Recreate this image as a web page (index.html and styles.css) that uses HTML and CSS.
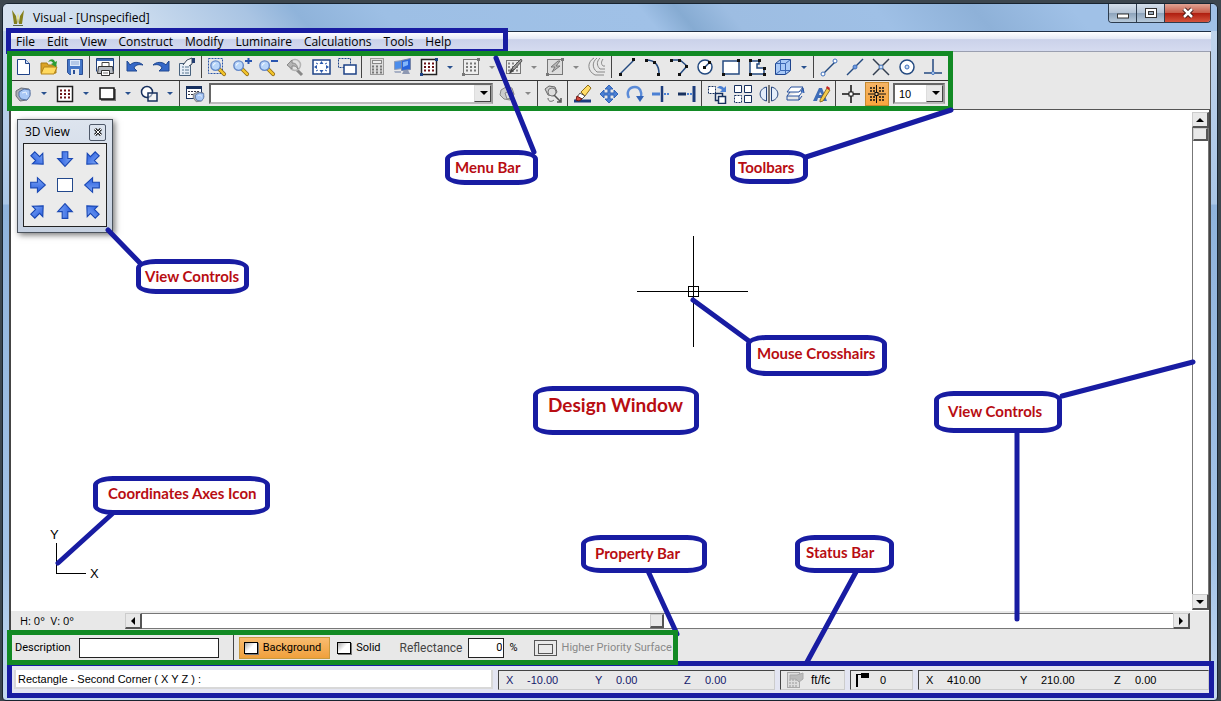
FILE: index.html
```
<!DOCTYPE html>
<html lang="en">
<head>
    <meta charset="UTF-8">
    <meta name="viewport" content="width=device-width, initial-scale=1.0">
    <title>Visual - [Unspecified]</title>
    <link rel="stylesheet" href="styles.css">
</head>
<body>
    <!-- shapes used by more than one button -->
    <svg class="defs" aria-hidden="true">
        <defs>
            <linearGradient id="arrow-fill" x1="0" y1="0" x2="0" y2="1"><stop offset="0" stop-color="#7ba4f4"/><stop offset="1" stop-color="#2a5fe0"/></linearGradient>
        </defs>
        <symbol id="lens" viewBox="0 0 20 20">
            <path d="M11 11l6 6" stroke="#8a6410" stroke-width="4" stroke-linecap="round"/>
            <path d="M11 11l6 6" stroke="#f2c42c" stroke-width="2.500" stroke-linecap="round"/>
            <circle cx="8" cy="8" r="5" fill="#b9d6fa" stroke="#6488c8" stroke-width="1.500"/>
            <path d="M5.500 8a3 3 0 0 1 2.500-2.500" fill="none" stroke="#fff"/>
        </symbol>
        <symbol id="view-arrow" viewBox="0 0 16 16">
            <path d="M1.500 5.500h6v-4l7 6.500-7 6.500v-4h-6z" fill="url(#arrow-fill)" stroke="#1a48b4"/>
        </symbol>
        <symbol id="dots" viewBox="0 0 20 20">
            <path d="M5 6.500h10M5 10h10M5 13.500h10" stroke-width="2" stroke-dasharray="2 2" fill="none"/>
        </symbol>
        <symbol id="surface" viewBox="0 0 20 20">
            <path d="M3 7l5-3 8 1 1 5-3 6-7 1-4-5z" fill="#a9adb4" stroke="#6c7078"/>
            <path d="M6 8l5-3 6 1v6l-3 4-6-1-2-3z" fill="#a9c8f6" stroke="#5573a8"/>
            <path d="M9 9l4-1 1 3" fill="none" stroke="#e8f2ff"/>
        </symbol>
    </svg>

    <div class="window">
        <header class="titlebar">
            <svg class="logo" viewBox="0 0 14 18"><path d="M1 1l2 14h3l1-5 1 5h3l2-14-4 6-1 6-1-8-1 8-1-6z" fill="#85801c"/><path d="M7 3l1 6-1 4-1-4z" fill="#f0ec9c"/><path d="M2 16.500h10" stroke="#5d6a48"/></svg>
            <span class="title">Visual - [Unspecified]</span>
            <div class="window-buttons">
                <button class="win-button" aria-label="Minimize"><svg viewBox="0 0 14 12"><rect x="1.500" y="7" width="11" height="4" fill="#fff" stroke="#333"/></svg></button>
                <button class="win-button" aria-label="Maximize"><svg viewBox="0 0 14 12"><rect x="1.500" y="1.500" width="11" height="9" fill="#fff" stroke="#333"/><rect x="4.500" y="4.500" width="5" height="3" fill="#9ab" stroke="#333"/></svg></button>
                <button class="win-button close" aria-label="Close"><svg viewBox="0 0 14 12"><path d="M3 2l8 8M11 2l-8 8" stroke="#3b1512" stroke-width="4.500"/><path d="M3 2l8 8M11 2l-8 8" stroke="#fff" stroke-width="2.500"/></svg></button>
            </div>
        </header>

        <div class="menubar">
            <nav class="menu-frame">
                <a href="#">File</a>
                <a href="#">Edit</a>
                <a href="#">View</a>
                <a href="#">Construct</a>
                <a href="#">Modify</a>
                <a href="#">Luminaire</a>
                <a href="#">Calculations</a>
                <a href="#">Tools</a>
                <a href="#">Help</a>
            </nav>
        </div>

        <div class="toolbars">
            <div class="toolbar-frame">
                <div class="toolbar">
                    <button class="tool" aria-label="New"><svg viewBox="0 0 20 20"><path d="M4.500 2.500h8l4 4v11h-12z" fill="#fff" stroke="#1f4388"/><path d="M12.500 2.500v4h4" fill="#cfe0fa" stroke="#1f4388"/></svg></button>
                    <button class="tool" aria-label="Open"><svg viewBox="0 0 20 20"><path d="M2 16V6h6l1 2h8v8z" fill="#dba325" stroke="#a87c14"/><path d="M2 17l3-7h13l-3 7z" fill="#ffd95e" stroke="#b5851a"/><path d="M9 5c3-4 6-3 7 0l2-1-1 6-5-3 2-1c-1-2-3-2-5-1z" fill="#2e9c34"/></svg></button>
                    <button class="tool" aria-label="Save"><svg viewBox="0 0 20 20"><path d="M2.500 2.500h15v15h-13l-2-2z" fill="#4577c8" stroke="#2c4f94"/><path d="M5 3h10v6H5z" fill="#dce9fb"/><path d="M6 5h8M6 7h8" stroke="#89a7d4"/><path d="M6 12h8v6H6z" fill="#e5e9ee"/><path d="M8 13h2v4H8z" fill="#2c4f94"/></svg></button>
                    <i class="separator"></i>
                    <button class="tool" aria-label="Print"><svg viewBox="0 0 20 20"><path d="M1.500 14.500v-13h17v13" fill="#fff" stroke="#1f3f7c"/><path d="M2 3h16" stroke="#3c68b4" stroke-width="2"/><path d="M7 5.500h7v5H7z" fill="#fff" stroke="#444"/><path d="M3.500 9.500h14l1 7h-16z" fill="#b7bcc4" stroke="#333"/><path d="M6.500 13.500h8v5h-8z" fill="#fff" stroke="#333"/><path d="M8 16h5" stroke="#777"/></svg></button>
                    <i class="separator"></i>
                    <button class="tool" aria-label="Undo"><svg viewBox="0 0 20 20"><path d="M3 5l2 3c4-4 10-3 13 0-5-1-8 0-9 3l3 3H2V4z" fill="#3568c8" stroke="#204890"/></svg></button>
                    <button class="tool" aria-label="Redo"><svg viewBox="0 0 20 20"><path d="M17 5l-2 3C11 4 5 5 2 8c5-1 8 0 9 3l-3 3h10V4z" fill="#3568c8" stroke="#204890"/></svg></button>
                    <button class="tool" aria-label="Properties"><svg viewBox="0 0 20 20"><path d="M2.500 6.500h11v12h-11z" fill="#e6eef7" stroke="#48627e"/><path d="M5 10h2M5 13h2M5 16h2M8 10h4M8 13h4M8 16h4" stroke="#587690"/><path d="M6 8l4-5 5-2v6l-3 2" fill="#f4f6f8" stroke="#38485c"/><path d="M15 1h3v5h-3z" fill="#223c70"/></svg></button>
                    <i class="separator"></i>
                    <button class="tool" aria-label="Zoom window"><svg viewBox="0 0 20 20"><rect x="1.500" y="1.500" width="14" height="15" fill="none" stroke="#2854a8" stroke-dasharray="2 1"/><use href="#lens" x="1" y="1" width="19" height="19"/></svg></button>
                    <button class="tool" aria-label="Zoom in"><svg viewBox="0 0 20 20"><use href="#lens" x="-2" y="1" width="19" height="19"/><path d="M12 4h7M15.500 1v6" stroke="#2854b0" stroke-width="2"/></svg></button>
                    <button class="tool" aria-label="Zoom out"><svg viewBox="0 0 20 20"><use href="#lens" x="-2" y="1" width="19" height="19"/><path d="M12 4h7" stroke="#2854b0" stroke-width="2"/></svg></button>
                    <button class="tool" aria-label="Zoom previous" disabled><svg viewBox="0 0 20 20"><path d="M10 11l7 7" stroke="#888" stroke-width="3"/><circle cx="10" cy="8" r="5.500" fill="#e2e2e2" stroke="#b4b4b4" stroke-width="1.500"/><path d="M2 8l5-5v3c4 0 5 2 6 6-2-3-3-3-6-3v3z" fill="#b4b4b4" stroke="#888"/></svg></button>
                    <button class="tool" aria-label="Zoom extents"><svg viewBox="0 0 20 20"><rect x="2" y="3" width="17" height="14" fill="#fff" stroke="#1d4286" stroke-width="1.500"/><path d="M10.500 4l2 3h-4zM10.500 16l2-3h-4zM3 10l3-2v4zM18 10l-3-2v4z" fill="#2a59ad"/><path d="M5 6l2 1M16 6l-2 1M5 14l2-1M16 14l-2-1" stroke="#2a59ad"/></svg></button>
                    <button class="tool" aria-label="Pan"><svg viewBox="0 0 20 20"><rect x="1.500" y="1.500" width="12" height="9" fill="none" stroke="#1d4286" stroke-dasharray="2 1"/><rect x="7" y="8" width="12" height="9" fill="#fff" stroke="#1d4286" stroke-width="1.500"/></svg></button>
                    <i class="separator"></i>
                    <button class="tool" aria-label="Calculate" disabled><svg viewBox="0 0 20 20"><rect x="3.500" y="1.500" width="13" height="16" fill="#ddd" stroke="#999"/><rect x="5.500" y="3.500" width="9" height="3" fill="#eee" stroke="#888"/><path d="M5 9.500h10M5 12.500h10M5 15.500h10" stroke="#777" stroke-width="2" stroke-dasharray="2 2"/></svg></button>
                    <button class="tool" aria-label="Render"><svg viewBox="0 0 20 20"><path d="M1.500 4.500l8-1v8l-8 1z" fill="#4b8dec" stroke="#8f9cb8"/><path d="M1 14h7v2H2z" fill="#a7b0c4"/><path d="M8.500 3.500l9-2v11l-9 1z" fill="#2864dc" stroke="#7786a8"/><path d="M10 5l5-1v4l-5 2z" fill="#82b6fa"/><path d="M11 13h4l2 4H9z" fill="#8d98b2"/></svg></button>
                    <button class="tool" aria-label="Calculation zone"><svg viewBox="0 0 20 20"><rect x="2.500" y="2.500" width="15" height="15" fill="#fff" stroke="#222" stroke-width="1.500"/><use href="#dots" stroke="#6e1216"/><path d="M1 16h3v3H1zM16 1h3v3h-3z" fill="#1d4286"/></svg></button>
                    <button class="drop" aria-label="More zones"></button>
                    <button class="tool" aria-label="Edit zone" disabled><svg viewBox="0 0 20 20"><rect x="2.500" y="2.500" width="15" height="15" fill="#eee" stroke="#777"/><use href="#dots" stroke="#777"/><path d="M1 16h3v3H1zM16 1h3v3h-3z" fill="#777"/></svg></button>
                    <button class="drop dim" aria-label="More zone edits"></button>
                    <button class="tool" aria-label="Zone brush" disabled><svg viewBox="0 0 20 20"><rect x="3.500" y="3.500" width="14" height="13" fill="#eee" stroke="#777"/><use href="#dots" stroke="#888"/><path d="M18 2L9 11l2 2 8-9z" fill="#999" stroke="#555"/><path d="M8 11l3 3-5 3z" fill="#444"/></svg></button>
                    <button class="drop dim" aria-label="More brushes"></button>
                    <button class="tool" aria-label="Power zone" disabled><svg viewBox="0 0 20 20"><rect x="2.500" y="2.500" width="15" height="15" fill="#ddd" stroke="#777"/><path d="M1 16h3v3H1zM16 1h3v3h-3z" fill="#777"/><path d="M13 4L6 10h4l-3 5 8-6h-4l4-5z" fill="#bbb" stroke="#777"/></svg></button>
                    <button class="drop dim" aria-label="More power zones"></button>
                    <button class="tool" aria-label="Contours" disabled><svg viewBox="0 0 20 20" fill="none" stroke="#888"><path d="M7 1c-7 4-7 13 1 17l9 0M10 1c-5 4-5 10 0 14l8 0M13 1c-4 4-3 8 0 11h5M16 2c-2 3-2 5 0 7h2"/></svg></button>
                    <i class="separator"></i>
                    <button class="tool" aria-label="Line"><svg viewBox="0 0 20 20"><path d="M3 17L17 3" stroke="#244a80" stroke-width="1.500"/><path d="M2 16h3v3H2zM15 1h3v3h-3z" fill="#111"/></svg></button>
                    <button class="tool" aria-label="Arc"><svg viewBox="0 0 20 20"><path d="M3 3c9 0 13 5 13 14" fill="none" stroke="#244a80" stroke-width="1.500"/><path d="M2 2h3v3H2zM10 4h3v3h-3zM14 16h3v3h-3z" fill="#111"/></svg></button>
                    <button class="tool" aria-label="Polyline"><svg viewBox="0 0 20 20"><path d="M2 3h9l7 6-7 8" fill="none" stroke="#244a80" stroke-width="1.500"/><path d="M1 2h3v3H1zM9 2h3v3H9zM16 8h3v3h-3zM9 16h3v3H9z" fill="#111"/></svg></button>
                    <button class="tool" aria-label="Circle"><svg viewBox="0 0 20 20"><circle cx="10" cy="10" r="7" fill="#fff" stroke="#244a80" stroke-width="1.500"/><path d="M10 10l4-4" stroke="#244a80" stroke-width="1.500"/><path d="M8 9h3v3H8zM13 4h3v3h-3z" fill="#111"/></svg></button>
                    <button class="tool" aria-label="Rectangle"><svg viewBox="0 0 20 20"><rect x="2" y="4" width="16" height="13" fill="#fff" stroke="#244a80" stroke-width="1.500"/><path d="M1 16h3v3H1zM16 2h3v3h-3z" fill="#111"/></svg></button>
                    <button class="tool" aria-label="Polygon"><svg viewBox="0 0 20 20"><path d="M3 4h9v3h-2v4h7v6H3z" fill="#fff" stroke="#244a80" stroke-width="1.500"/><path d="M2 2h3v3H2zM11 2h3v3h-3zM16 10h3v3h-3zM16 16h3v3h-3zM2 16h3v3H2z" fill="#111"/></svg></button>
                    <button class="tool" aria-label="Solid"><svg viewBox="0 0 20 20"><path d="M2.500 6.500l5-4h10v11l-5 4h-10z" fill="#a9c9f7" stroke="#1f448c"/><path d="M2.500 6.500h10v11M12.500 6.500l5-4M7.500 2.500v11h10M7.500 13.500l-5 4" fill="none" stroke="#3a66b4"/></svg></button>
                    <button class="drop" aria-label="More solids"></button>
                    <i class="separator"></i>
                    <button class="tool" aria-label="Snap endpoint"><svg viewBox="0 0 20 20"><path d="M4 17L17 4" stroke="#244a80" stroke-width="1.500"/><circle cx="4" cy="17" r="2" fill="#fff" stroke="#3f70bd"/><circle cx="16" cy="4" r="2" fill="#fff" stroke="#3f70bd"/></svg></button>
                    <button class="tool" aria-label="Snap midpoint"><svg viewBox="0 0 20 20"><path d="M2 18L18 2" stroke="#244a80" stroke-width="1.500"/><circle cx="10" cy="10" r="2" fill="#6f9ade" stroke="#3f70bd"/></svg></button>
                    <button class="tool" aria-label="Snap intersection"><svg viewBox="0 0 20 20"><path d="M2 2l16 16M18 2L2 18" stroke="#333f50" stroke-width="1.500"/><circle cx="10" cy="10" r="2" fill="#cde" stroke="#3f70bd"/></svg></button>
                    <button class="tool" aria-label="Snap center"><svg viewBox="0 0 20 20"><circle cx="10" cy="10" r="7" fill="#fff" stroke="#244a80" stroke-width="1.500"/><circle cx="10" cy="10" r="2" fill="#cde" stroke="#3f70bd"/></svg></button>
                    <button class="tool" aria-label="Snap perpendicular"><svg viewBox="0 0 20 20"><path d="M10 2v14M1 16h18" stroke="#244a80" stroke-width="1.500"/><circle cx="10" cy="16" r="1.500" fill="#cde" stroke="#3f70bd"/></svg></button>
                </div>
                <div class="toolbar">
                    <button class="tool" aria-label="Surface"><svg viewBox="0 0 20 20"><use href="#surface"/></svg></button>
                    <button class="drop" aria-label="More surfaces"></button>
                    <button class="tool" aria-label="Grid"><svg viewBox="0 0 20 20"><rect x="2.500" y="2.500" width="15" height="15" fill="#fff" stroke="#222" stroke-width="1.500"/><use href="#dots" stroke="#6e1216"/></svg></button>
                    <button class="drop" aria-label="More grids"></button>
                    <button class="tool" aria-label="Fill"><svg viewBox="0 0 20 20"><path d="M4 16h14V5" fill="none" stroke="#777" stroke-width="2"/><rect x="3" y="4" width="14" height="11" fill="#fff" stroke="#111" stroke-width="1.500"/></svg></button>
                    <button class="drop" aria-label="More fills"></button>
                    <button class="tool" aria-label="Shapes"><svg viewBox="0 0 20 20"><circle cx="8" cy="8" r="5.500" fill="#fff" stroke="#17305e" stroke-width="1.500"/><rect x="9" y="9" width="9" height="8" fill="#fff" fill-opacity=".5" stroke="#17305e" stroke-width="1.500"/></svg></button>
                    <button class="drop" aria-label="More shapes"></button>
                    <i class="separator"></i>
                    <button class="tool" aria-label="Layer list"><svg viewBox="0 0 20 20"><rect x="1.500" y="2.500" width="15" height="12" fill="#fff" stroke="#17305e"/><path d="M1 3.500h16" stroke="#17305e" stroke-width="3"/><path d="M3 7.500h11M3 10.500h6" stroke="#334" stroke-dasharray="2 1"/><use href="#surface" x="6" y="5" width="15" height="15"/></svg></button>
                    <span class="combo layer"><select aria-label="Layer"><option></option></select></span>
                    <button class="tool" aria-label="Place surface" disabled><svg viewBox="0 0 20 20"><path d="M4 6l5-3 6 1 2 6-4 6-6-1-4-4z" fill="#ccc" stroke="#888"/><path d="M8 9l5-2 4 3-2 4-5 1z" fill="#ddd" stroke="#888"/></svg></button>
                    <button class="drop dim" aria-label="More placements"></button>
                    <i class="separator"></i>
                    <button class="tool" aria-label="Find surface" disabled><svg viewBox="0 0 20 20"><path d="M2 5l4-3 6 1 2 5-3 4-6-1z" fill="#ccc" stroke="#666"/><circle cx="9" cy="8" r="4" fill="#ddd" stroke="#777"/><path d="M11 11l6 6M18 14v4h-4" stroke="#555" fill="none" stroke-width="1.500"/><path d="M5 14c0 4 4 4 6 2" fill="none" stroke="#666"/></svg></button>
                    <i class="separator"></i>
                    <button class="tool" aria-label="Erase"><svg viewBox="0 0 20 20"><path d="M1 17h17" stroke="#1e3c80" stroke-width="3"/><path d="M8 8l7-7 3 3-6 8z" fill="#ffdc68" stroke="#8e6d17"/><path d="M7 9l5 3-3 3-5-2z" fill="#fff" stroke="#555"/><path d="M4 12l5 3-3 2-3-1z" fill="#d4483c" stroke="#6e1510"/></svg></button>
                    <button class="tool" aria-label="Move"><svg viewBox="0 0 20 20"><path d="M10 1l4 4h-3v4h4V6l4 4-4 4v-3h-4v4h3l-4 4-4-4h3v-4H5v3l-4-4 4-4v3h4V5H6z" fill="#4b80d4" stroke="#3264b8"/></svg></button>
                    <button class="tool" aria-label="Rotate"><svg viewBox="0 0 20 20"><path d="M4 14C1 8 4 3 10 3c5 0 7 5 6 10" fill="none" stroke="#5b8bd8" stroke-width="2.500"/><path d="M11 12h8l-4 6z" fill="#3264b8"/></svg></button>
                    <button class="tool" aria-label="Trim"><svg viewBox="0 0 20 20"><path d="M1 10h8" stroke="#4b80d4" stroke-width="3"/><path d="M11 2v16" stroke="#1d3d7c" stroke-width="2.500"/><path d="M13 10h6" stroke="#4b80d4" stroke-width="2" stroke-dasharray="2 1"/></svg></button>
                    <button class="tool" aria-label="Extend"><svg viewBox="0 0 20 20"><path d="M1 10h8" stroke="#17305e" stroke-width="3"/><path d="M10 10h6" stroke="#4b80d4" stroke-width="2" stroke-dasharray="2 1"/><path d="M17 2v16" stroke="#1d3d7c" stroke-width="3"/></svg></button>
                    <i class="separator"></i>
                    <button class="tool" aria-label="Copy"><svg viewBox="0 0 20 20" fill="#fff" stroke="#17305e"><path d="M1.500 2.500h7v7h-7z" stroke-dasharray="2 1"/><path d="M8.500 9.500h7v7h-7z" stroke-width="1.500"/><path d="M11.500 12.500h7v7h-7z" stroke-width="1.500"/><path d="M10 4c3-4 6-1 7 0l2-2v6h-6l2-2c-1-1-2-2-5-2z" fill="#4b80d4" stroke="none"/></svg></button>
                    <button class="tool" aria-label="Array"><svg viewBox="0 0 20 20" fill="#fff" stroke="#17305e"><path d="M1.500 1.500h7v7h-7zM11.500 1.500h7v7h-7zM11.500 11.500h7v7h-7z"/><path d="M1.500 11.500h7v7h-7z" stroke-dasharray="2 1"/></svg></button>
                    <button class="tool" aria-label="Mirror"><svg viewBox="0 0 20 20"><path d="M7.500 3C-1 5-1 15 7.500 17zM12.500 3c8.500 2 8.500 12 0 14z" fill="#e4edfa" stroke="#24447c"/><path d="M10 1v18" stroke="#111"/></svg></button>
                    <button class="tool" aria-label="Offset"><svg viewBox="0 0 20 20" fill="none" stroke="#27509c"><path d="M6 3h12l-4 5H2zM2 12h12l4-5" fill="#fff"/><path d="M2 12l3-4M2 16h12l3-4M2 12v4M14 12v4"/><path d="M16 8l2-4 1 5" fill="#4b80d4"/></svg></button>
                    <button class="tool" aria-label="Text"><svg viewBox="0 0 20 20"><path d="M2 17L8 4h3l5 13h-4l-1-3H7l-1 3zM8 11h3L9 8z" fill="#3e6db8"/><path d="M9 16l7-12 3 2-7 11-3 1z" fill="#f4cb4c" stroke="#725514" stroke-width=".8"/><path d="M15 4l1-2 3 2-1 2z" fill="#c52424"/></svg></button>
                    <i class="separator"></i>
                    <button class="tool" aria-label="Crosshairs"><svg viewBox="0 0 20 20"><path d="M10 1v7M10 12v7M1 10h7M12 10h7" stroke="#111" stroke-width="1.500"/><rect x="8" y="8" width="4" height="4" fill="#fff" stroke="#111"/></svg></button>
                    <button class="tool active" aria-label="Snap to grid"><svg viewBox="0 0 20 20"><path d="M3 4h5M3 7h5M12 4h5M12 7h5M3 13h5M3 16h5M12 13h5M12 16h5" stroke="#111" stroke-width="1.500" stroke-dasharray="2 1"/><path d="M1 10h18M9.500 1v18" stroke="#111"/><rect x="8" y="8.500" width="3" height="3" fill="#fc8" stroke="#111"/></svg></button>
                    <span class="combo spacing"><select aria-label="Grid spacing"><option>10</option></select></span>
                </div>
            </div>
        </div>

        <main class="workspace">
            <section class="design" aria-label="Design window"></section>
            <div class="scroll vertical">
                <button class="scroll-button" aria-label="Scroll up"><svg viewBox="0 0 8 8"><path d="M4 2l4 4H0z"/></svg></button>
                <div class="track"><div class="thumb"></div></div>
                <button class="scroll-button" aria-label="Scroll down"><svg viewBox="0 0 8 8"><path d="M4 6l4-4H0z"/></svg></button>
            </div>
        </main>

        <div class="view-row">
            <span class="angles">H: 0°&nbsp; V: 0°</span>
            <div class="scroll horizontal">
                <button class="scroll-button" aria-label="Scroll left"><svg viewBox="0 0 8 8"><path d="M2 4l4-4v8z"/></svg></button>
                <div class="track"><div class="thumb"></div></div>
                <button class="scroll-button" aria-label="Scroll right"><svg viewBox="0 0 8 8"><path d="M6 4L2 0v8z"/></svg></button>
            </div>
        </div>

        <div class="property-bar">
            <form class="property-frame">
                <label for="description">Description</label>
                <input class="description" id="description" type="text">
                <i class="separator"></i>
                <button class="option active" type="button"><span class="swatch"></span>Background</button>
                <button class="option" type="button"><span class="swatch"></span>Solid</button>
                <label class="soft" for="reflectance">Reflectance</label>
                <input class="reflectance" id="reflectance" type="text" value="0">
                <span class="percent">%</span>
                <button class="option priority" type="button" disabled><span class="priority-box"></span>Higher Priority Surface</button>
            </form>
        </div>

        <footer class="status-bar">
            <input class="command" type="text" aria-label="Command" value="Rectangle - Second Corner ( X Y Z ) :">
            <div class="panel coords blue"><span>X</span><span>-10.00</span><span>Y</span><span>0.00</span><span>Z</span><span>0.00</span></div>
            <div class="panel units"><svg viewBox="0 0 20 20"><rect x="2.500" y="2.500" width="12" height="15" fill="#ddd" stroke="#aaa"/><path d="M4 10h9M4 13h9M4 16h9" stroke="#999" stroke-dasharray="2 1"/><path d="M5 5h7l6-2v6l-4 3-3-3H5z" fill="#bbb" stroke="#aaa"/></svg><span>ft/fc</span></div>
            <div class="panel flag"><svg viewBox="0 0 16 16"><path d="M2 2v13" stroke="#000" stroke-width="2"/><path d="M1 2h5V1h8v5H6V3H1z"/></svg><span>0</span></div>
            <div class="panel coords wide"><span>X</span><span>410.00</span><span>Y</span><span>210.00</span><span>Z</span><span>0.00</span></div>
        </footer>
    </div>

    <aside class="view-panel">
        <div class="view-title">3D View<button class="view-close" aria-label="Close 3D View"><svg viewBox="0 0 8 8"><path d="M1 1l6 6M7 1L1 7" stroke="#222" stroke-width="3"/><path d="M1 1l6 6M7 1L1 7" stroke="#fff"/></svg></button></div>
        <div class="view-grid">
            <button class="view se" aria-label="View south east"><svg><use href="#view-arrow"/></svg></button>
            <button class="view s" aria-label="View south"><svg><use href="#view-arrow"/></svg></button>
            <button class="view sw" aria-label="View south west"><svg><use href="#view-arrow"/></svg></button>
            <button class="view" aria-label="View east"><svg><use href="#view-arrow"/></svg></button>
            <button class="view" aria-label="View plan"><span class="plan"></span></button>
            <button class="view w" aria-label="View west"><svg><use href="#view-arrow"/></svg></button>
            <button class="view ne" aria-label="View north east"><svg><use href="#view-arrow"/></svg></button>
            <button class="view n" aria-label="View north"><svg><use href="#view-arrow"/></svg></button>
            <button class="view nw" aria-label="View north west"><svg><use href="#view-arrow"/></svg></button>
        </div>
    </aside>

    <svg class="crosshairs" viewBox="0 0 111 111" aria-hidden="true">
        <path d="M0 55.500h111M56.500 0v111" stroke="#000"/>
        <rect x="51.500" y="50.500" width="10" height="10" fill="none" stroke="#000"/>
    </svg>

    <div class="axes">
        <span>Y</span>
        <i class="axis-lines"></i>
        <span class="x">X</span>
    </div>

    <!-- leader lines from the callouts to the parts they name -->
    <svg class="leaders" aria-hidden="true">
        <path d="M496 58L534 152M951 110L806 157M108 230L140 263M693 300L749 341M1062 396L1193 362M1017 432V619M112 514L58 563M648 571L677 634M856 572L807 662"/>
    </svg>
    <div class="callout menu-bar">Menu Bar</div>
    <div class="callout tool-bars">Toolbars</div>
    <div class="callout view-controls">View Controls</div>
    <div class="callout mouse">Mouse Crosshairs</div>
    <div class="callout design-window">Design Window</div>
    <div class="callout scroll-controls">View Controls</div>
    <div class="callout axes-icon">Coordinates Axes Icon</div>
    <div class="callout property">Property Bar</div>
    <div class="callout status">Status Bar</div>
</body>
</html>
```
FILE: styles.css
```
:root {
    --blue: #181ca2;
    --green: #128a24;
    --face: #e8e8e8;
}

* {
    box-sizing: border-box;
}

body {
    margin: 0;
    height: 100vh;
    position: relative;
    overflow: hidden;
    background-color: #3c464e;
    font-family: "Open Sans", "Noto Sans", sans-serif;
    font-size: 12px;
    line-height: 16px;
    color: #000;
}

button,
input,
select {
    margin: 0;
    padding: 0;
    border: 0;
    border-radius: 0;
    background: none;
    font: inherit;
    color: inherit;
}

svg {
    display: block;
    flex: none;
}

.defs {
    position: absolute;
    width: 0;
    height: 0;
}

.window {
    display: flex;
    flex-direction: column;
    height: calc(100vh - 3px);
    margin: 0 3px 0 2px;
    position: relative;
    top: 3px;
    padding: 0 6px 2px;
    border: 1px solid #182430;
    border-radius: 6px 6px 4px 4px;
    background: linear-gradient(#c3d6ec, #aac6e6 200px, #8fb3dc 201px, #a4c4e8 80%, #c4d8f0);
}

/* title bar */
.titlebar {
    display: flex;
    align-items: center;
    flex: none;
    height: 27px;
    margin: 0 -6px;
    padding-left: 8px;
    border-radius: 5px 5px 0 0;
    background: linear-gradient(50deg, #d7e2ef 0, #cadbee 12%, #a9c4e3 21%, #8fb3da 25%, #9dbfe5 32%, #a0c1e7 53%, #86abd2 56%, #9dbde2 60%, #9fc0e6 72%, #8eb1d8 80%, #a0c1e7 88%);
}

.logo {
    width: 14px;
    height: 18px;
}

.title {
    margin-left: 8px;
    flex: 1;
}

.window-buttons {
    display: flex;
    align-self: flex-start;
    margin-right: 6px;
    border: 1px solid #2d3c4e;
    border-top: 0;
    border-radius: 0 0 4px 4px;
    overflow: hidden;
}

.win-button {
    display: flex;
    align-items: center;
    justify-content: center;
    width: 28px;
    height: 18px;
    border-right: 1px solid #2d3c4e;
    background: linear-gradient(#d4dfeb, #b3c3d5 50%, #8ba2ba 50%, #b8cadb);
}

.win-button svg {
    width: 14px;
    height: 12px;
}

.win-button.close {
    width: 45px;
    border-right: 0;
    background: linear-gradient(#e0a394, #c75b48 50%, #ae1c0e 50%, #d4533c);
}

/* menus */
.menubar {
    flex: none;
    height: 20px;
    border-top: 1px solid #1e2e44;
    background: linear-gradient(#fff, #e6eaf6 35%, #cbd2ea 40%, #d5dbf0);
}

.menu-frame {
    display: flex;
    align-items: center;
    gap: 12px;
    width: 502px;
    height: 26px;
    margin: -4px 0 0 -3px;
    padding: 2px 0 0 5px;
    border: 5px solid var(--blue);
}

.menu-frame a {
    color: #000;
    text-decoration: none;
}

/* toolbars */
.toolbars {
    flex: none;
    height: 59px;
    border: 1px solid #555;
    border-top-color: #9a9fb0;
    background-color: var(--face);
}

.toolbar-frame {
    position: relative;
    width: fit-content;
    margin: -1px 0 0 -3px;
    border: 5px solid var(--green);
}

.toolbar {
    display: flex;
    align-items: center;
    gap: 6px;
    height: 24px;
    padding: 0 3px 2px 1px;
}

.toolbar + .toolbar {
    height: 26px;
    padding-bottom: 0;
    border-top: 1px solid #333;
}

.tool {
    flex: none;
    width: 20px;
    height: 20px;
}

.tool svg {
    width: 20px;
    height: 20px;
}

.tool.active {
    margin: 0 -2px;
    width: 24px;
    height: 24px;
    padding: 0 1px;
    border: 1px solid #c78a2e;
    background: linear-gradient(#f5b465, #f9a63e);
}

.drop {
    flex: none;
    width: 10px;
    height: 20px;
    display: flex;
    align-items: center;
    justify-content: center;
}

.drop::before {
    content: "";
    border: 3px solid transparent;
    border-top-color: #28508e;
    border-bottom: 0;
}

.drop.dim::before {
    border-top-color: #888;
}

.separator {
    flex: none;
    align-self: stretch;
    width: 1px;
    margin: 0 -1px 0 -2px;
    background-color: #444;
}

.combo {
    position: relative;
    display: flex;
    height: 21px;
    border: 2px solid #666;
    border-right-color: #999;
    border-bottom-color: #bbb;
    background-color: #fff;
}

.combo select {
    flex: 1;
    padding-left: 4px;
    appearance: none;
    font-family: "Liberation Sans", sans-serif;
    font-size: 11px;
}

.combo::after {
    content: "";
    position: absolute;
    top: 6px;
    right: 3px;
    border: 4px solid transparent;
    border-top-color: #000;
    border-bottom: 0;
    pointer-events: none;
}

.combo::before {
    content: "";
    position: absolute;
    top: 0;
    right: 0;
    bottom: 0;
    width: 15px;
    border: 1px solid #ddd;
    border-right-color: #444;
    border-bottom-color: #444;
    background-color: var(--face);
    pointer-events: none;
}

.combo.layer {
    width: 284px;
    margin: 0 -2px;
}

.combo.spacing {
    width: 52px;
}

/* drawing area and scroll bars */
.workspace {
    display: flex;
    flex: 1;
    min-height: 0;
    border: solid #444;
    border-width: 0 2px;
    background-color: #fff;
}

.design {
    flex: 1;
}

.scroll {
    display: flex;
}

.vertical {
    flex-direction: column;
    width: 17px;
    padding: 2px 0 1px;
}

.horizontal {
    flex: 1;
    margin: 2px 19px 1px 0;
}

.track {
    flex: 1;
    background-color: #fff;
}

.vertical .track {
    border: solid #777;
    border-width: 0 1px;
}

.horizontal .track {
    border: solid #777;
    border-width: 1px 0;
}

.scroll-button,
.thumb {
    flex: none;
    border: 1px solid #ccc;
    border-right: 2px solid #555;
    border-bottom: 2px solid #555;
    background-color: var(--face);
}

.scroll-button {
    display: flex;
    align-items: center;
    justify-content: center;
    width: 17px;
    height: 16px;
}

.scroll-button svg {
    width: 8px;
    height: 8px;
}

.vertical .thumb {
    height: 13px;
}

.horizontal .thumb {
    width: 14px;
    height: 100%;
    margin-left: 49.3%;
}

.view-row {
    display: flex;
    align-items: center;
    flex: none;
    height: 19px;
    border: solid #444;
    border-width: 0 2px;
    background-color: var(--face);
}

.angles {
    width: 114px;
    padding-left: 9px;
    font-size: 11px;
}

/* property bar */
.property-bar {
    flex: none;
    height: 35px;
    border: solid #444;
    border-width: 0 2px;
    background-color: var(--face);
    font-family: Roboto, sans-serif;
    font-size: 11px;
}

.property-frame {
    position: relative;
    z-index: 1;
    display: flex;
    align-items: center;
    width: 671px;
    height: 35px;
    margin-left: -4px;
    padding-left: 3px;
    border: 5px solid var(--green);
    background-color: var(--face);
    white-space: nowrap;
}

.description {
    width: 140px;
    height: 20px;
    margin: 0 14px 0 8px;
    border: 1px solid #222;
    background-color: #fff;
}

.property-frame .separator {
    margin: 0 5px 0 0;
}

.option {
    display: flex;
    align-items: center;
    gap: 5px;
    height: 22px;
    padding: 0 8px 0 4px;
    border: 1px solid transparent;
}

.option.active {
    margin-right: 2px;
    border-color: #c99a3e;
    background: linear-gradient(#f8bc70, #f0a03c);
}

.swatch {
    width: 14px;
    height: 12px;
    border: 1px solid #000;
    box-shadow: 1px 1px #777;
    background: linear-gradient(135deg, #aaa, #fff 50%);
}

.soft {
    margin-left: 10px;
    color: #444;
    font-size: 12px;
}

.reflectance {
    width: 36px;
    height: 20px;
    margin: 0 5px 0 6px;
    padding-right: 1px;
    border: 1px solid #222;
    background-color: #fff;
    text-align: right;
}

.option.priority {
    margin-left: 11px;
    padding-right: 0;
    color: #888;
}

.priority-box {
    width: 23px;
    height: 16px;
    padding: 3px;
    border: 1px solid #555;
}

.priority-box::before {
    content: "";
    display: block;
    height: 8px;
    border: 1px solid #555;
}

/* status bar */
.status-bar {
    display: flex;
    gap: 5px;
    flex: none;
    height: 37px;
    margin: -4px -3px 0 -2px;
    padding: 4px 0;
    border: 5px solid var(--blue);
    background-color: #e3e5f2;
    font-family: "Liberation Sans", sans-serif;
    font-size: 11px;
}

.command {
    flex: 1;
    margin-left: 2px;
    padding-left: 2px;
    border: solid #d8d8d8;
    border-width: 0 2px 2px;
    background-color: #fff;
}

.panel {
    display: flex;
    align-items: center;
    height: 20px;
    border: 1px solid #ccc;
    border-top-color: #444;
    border-left-color: #444;
    background-color: var(--face);
}

.coords {
    width: 277px;
    padding-left: 7px;
}

.coords span:nth-child(odd) {
    width: 21px;
}

.coords span:nth-child(even) {
    width: 68px;
}

.blue {
    color: #14186c;
}

.wide {
    width: 291px;
}

.wide span:nth-child(even) {
    width: 73px;
}

.units {
    width: 65px;
    gap: 6px;
    padding-left: 4px;
    font-size: 12px;
}

.units svg {
    width: 20px;
    height: 20px;
}

.flag {
    width: 63px;
    gap: 9px;
    padding-left: 4px;
}

.flag svg {
    width: 16px;
    height: 16px;
}

/* floating 3D view palette */
.view-panel {
    position: absolute;
    left: 17px;
    top: 119px;
    width: 96px;
    padding: 3px 5px 5px;
    border: 1px solid #4a525c;
    background: linear-gradient(#dde4ee, #c5d0e0);
    box-shadow: 2px 2px 6px #777;
}

.view-title {
    display: flex;
    align-items: center;
    justify-content: space-between;
    height: 20px;
    padding: 0 1px 2px 2px;
}

.view-close {
    display: flex;
    align-items: center;
    justify-content: center;
    width: 17px;
    height: 17px;
    border: 1px solid #4e5868;
    border-radius: 2px;
}

.view-close svg {
    width: 8px;
    height: 8px;
}

.view-grid {
    display: grid;
    grid-template-columns: repeat(3, 1fr);
    padding: 2px 1px;
    border: 1px solid #222;
    background-color: #ebebeb;
}

.view {
    display: flex;
    align-items: center;
    justify-content: center;
    height: 26px;
}

.view svg {
    width: 18px;
    height: 18px;
}

.plan {
    width: 16px;
    height: 14px;
    border: 1px solid #23488c;
    background-color: #fff;
}

.se svg { transform: rotate(45deg); }
.s svg { transform: rotate(90deg); }
.sw svg { transform: rotate(135deg); }
.w svg { transform: rotate(180deg); }
.nw svg { transform: rotate(225deg); }
.n svg { transform: rotate(270deg); }
.ne svg { transform: rotate(315deg); }

.crosshairs {
    position: absolute;
    left: 637px;
    top: 236px;
    width: 111px;
    height: 111px;
}

.axes {
    position: absolute;
    left: 50px;
    top: 527px;
    display: grid;
    grid-template-columns: 36px 12px;
    font-family: "Liberation Sans", sans-serif;
    font-size: 13px;
}

.axis-lines {
    grid-row: 2;
    height: 31px;
    margin-left: 6px;
    border: solid #000;
    border-width: 0 0 1px 1px;
}

.axes .x {
    grid-row: 2;
    align-self: end;
    margin: 0 0 -8px 4px;
}

/* callouts */
.leaders {
    position: absolute;
    left: 0;
    top: 0;
    width: 100%;
    height: 100%;
    fill: none;
    stroke: var(--blue);
    stroke-width: 5px;
    stroke-linecap: round;
    pointer-events: none;
}

.callout {
    position: absolute;
    padding: 3px 0 0 5px;
    border: 5px solid var(--blue);
    border-radius: 20px / 9px;
    background-color: #fff;
    color: #b80d12;
    font-family: Lato, sans-serif;
    font-size: 15px;
    font-weight: 700;
    line-height: 18px;
    white-space: nowrap;
}

.menu-bar { left: 445px; top: 150px; width: 93px; height: 35px; }
.tool-bars { left: 730px; top: 150px; width: 78px; height: 34px; padding-left: 3px; }
.view-controls { left: 136px; top: 259px; width: 113px; height: 35px; padding-left: 4px; }
.mouse { left: 746px; top: 335px; width: 141px; height: 41px; padding: 4px 0 0 6px; }
.design-window { left: 533px; top: 386px; width: 166px; height: 49px; padding: 5px 0 0 10px; font-size: 19px; }
.scroll-controls { left: 934px; top: 391px; width: 128px; height: 42px; padding: 6px 0 0 9px; }
.axes-icon { left: 93px; top: 476px; width: 177px; height: 39px; padding-left: 10px; }
.property { left: 581px; top: 535px; width: 126px; height: 38px; padding: 4px 0 0 9px; }
.status { left: 795px; top: 535px; width: 99px; height: 38px; padding-left: 6px; }
```
